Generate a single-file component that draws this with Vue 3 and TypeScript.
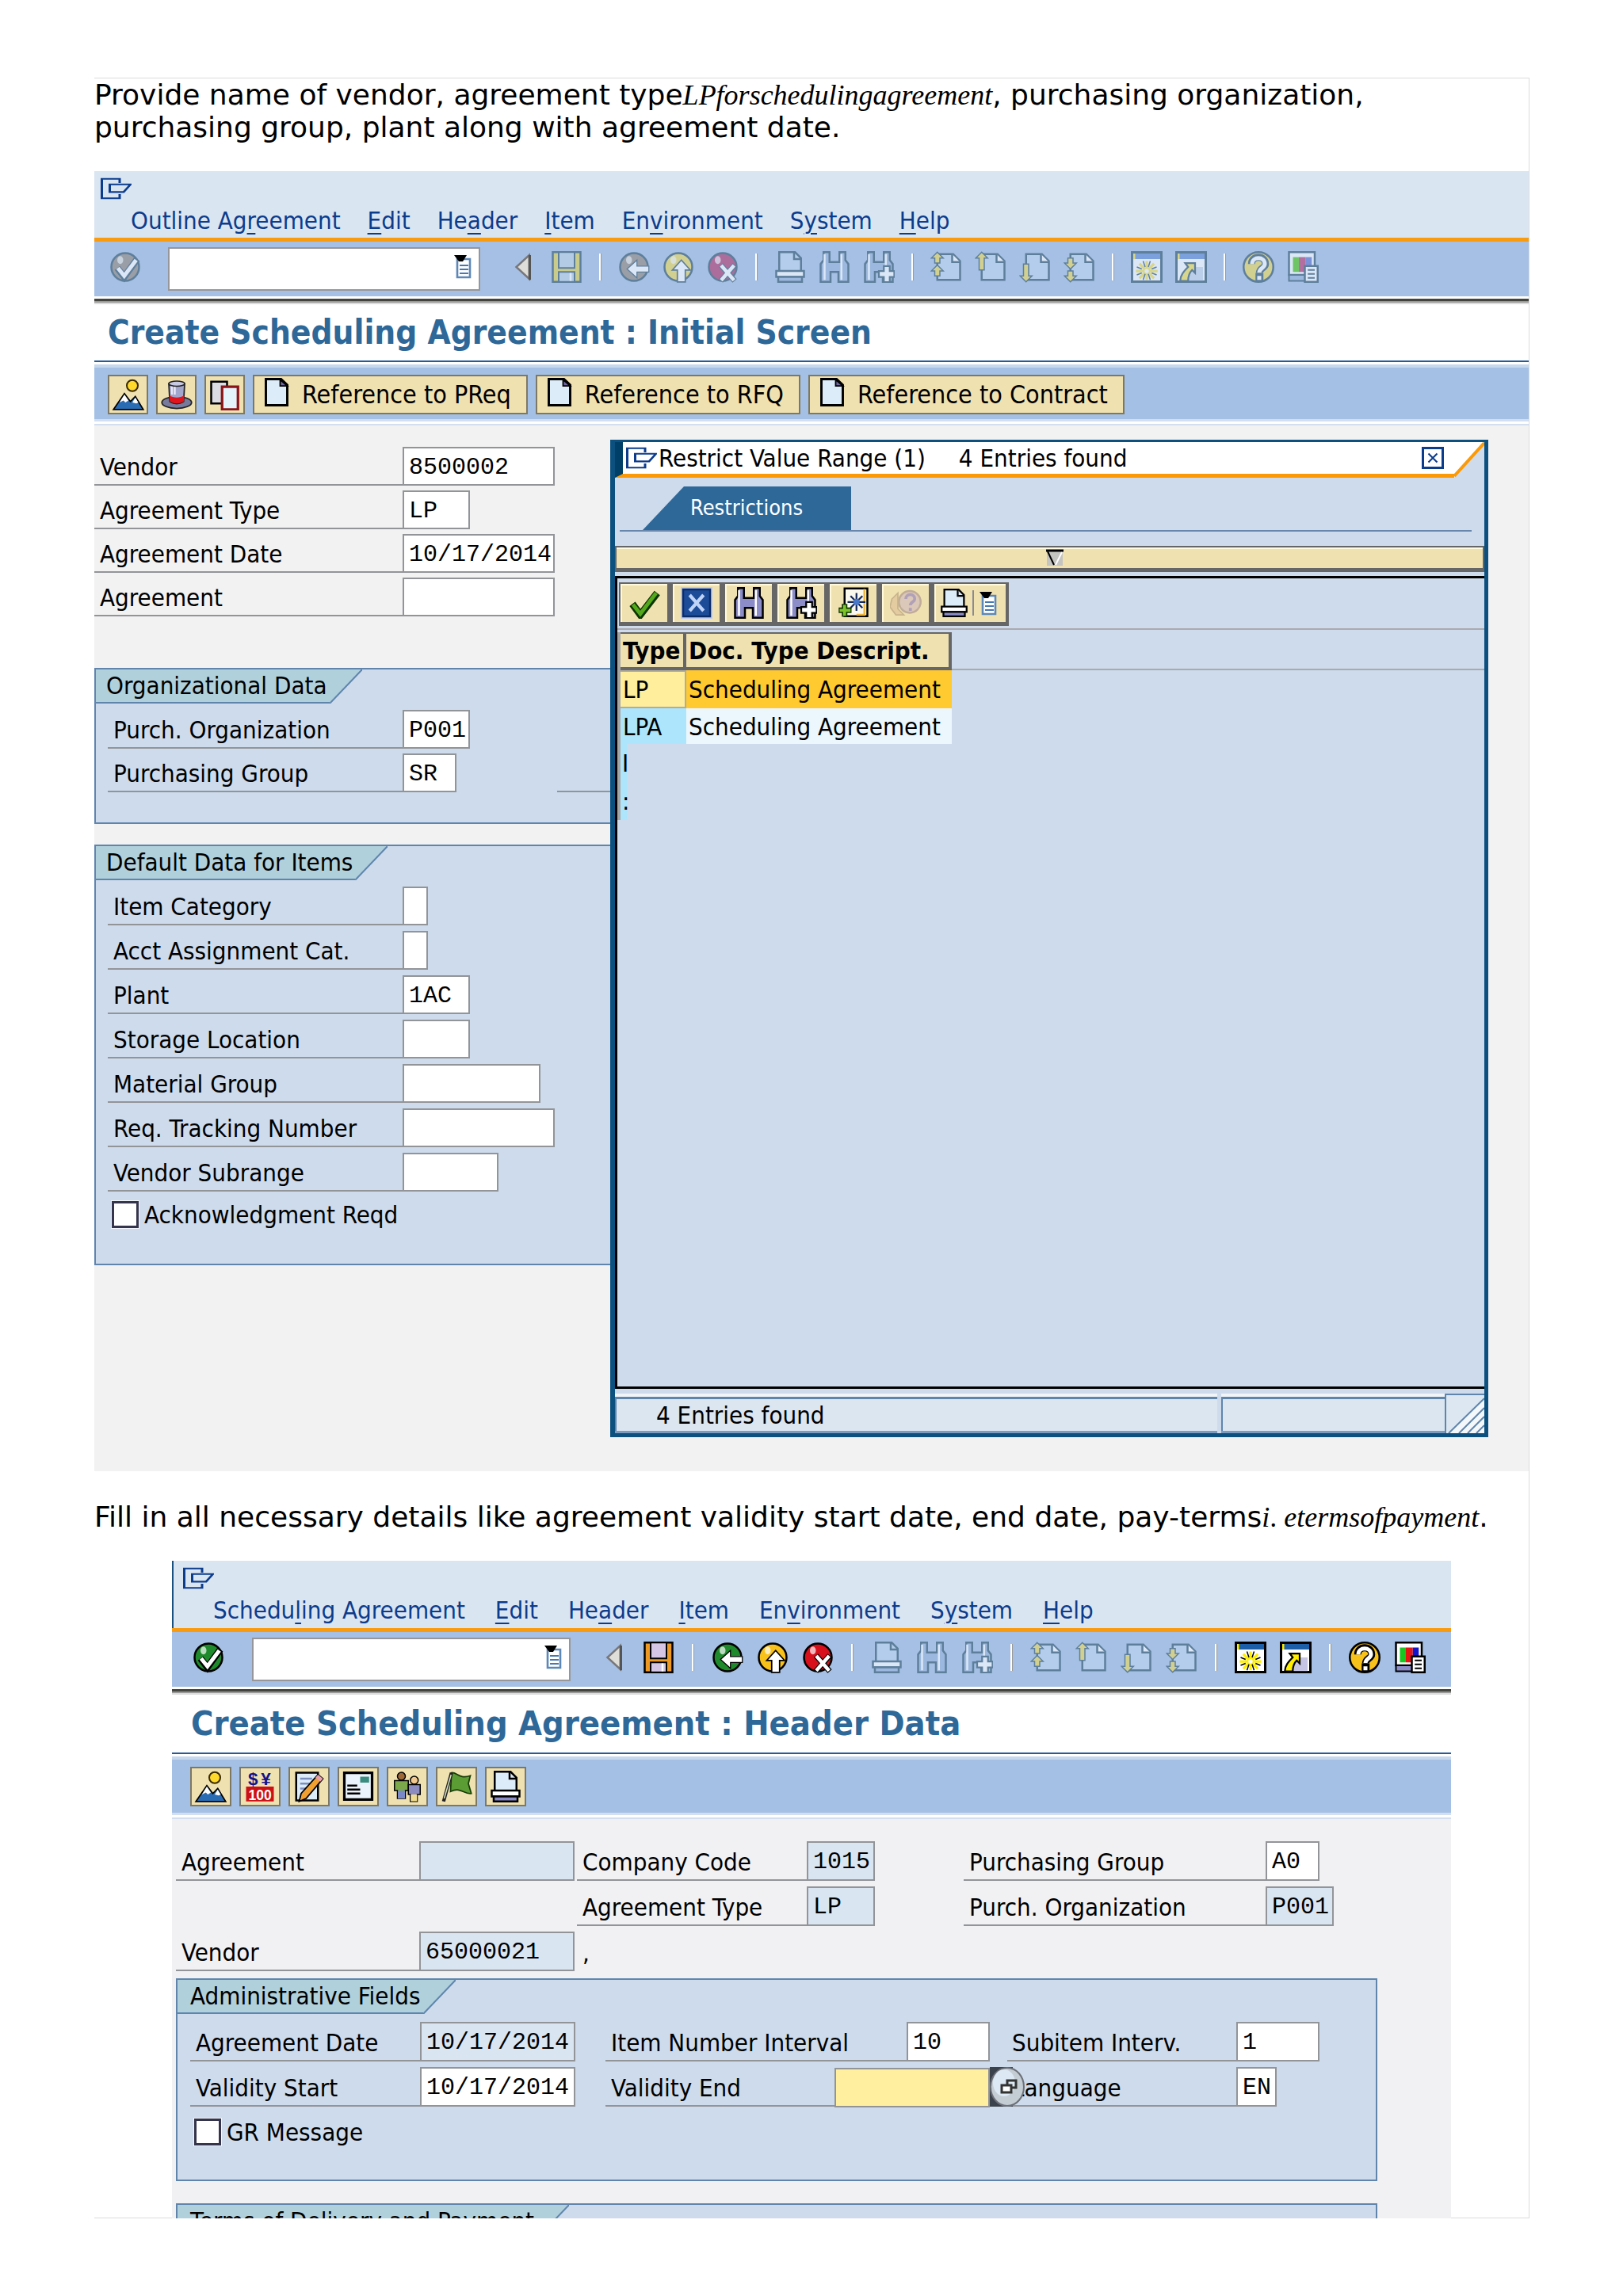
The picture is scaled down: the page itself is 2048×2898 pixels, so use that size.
<script setup lang="ts">
interface MenuEntry { before: string; key: string; after: string }
interface Tool { name: string; off?: boolean; sep?: boolean }
interface Field { id: string; label: string; value: string; width: number }

const menu = (...items: string[]): MenuEntry[] =>
  items.map((text) => {
    const [before, rest] = text.split('&')
    return { before, key: rest.slice(0, 1), after: rest.slice(1) }
  })

const outlineMenu = menu('Outline Ag&reement', '&Edit', 'He&ader', '&Item', 'En&vironment', 'S&ystem', '&Help')
const scheduleMenu = menu('Schedu&ling Agreement', '&Edit', 'He&ader', '&Item', 'En&vironment', 'S&ystem', '&Help')

const tools = (inactive: boolean): Tool[] => [
  { name: 'save', off: inactive },
  { name: '', sep: true },
  { name: 'back', off: inactive },
  { name: 'up', off: inactive },
  { name: 'cancel', off: inactive },
  { name: '', sep: true },
  { name: 'print', off: true },
  { name: 'find', off: true },
  { name: 'findnext', off: true },
  { name: '', sep: true },
  { name: 'first', off: true },
  { name: 'prev', off: true },
  { name: 'next', off: true },
  { name: 'last', off: true },
  { name: '', sep: true },
  { name: 'session', off: inactive },
  { name: 'shortcut', off: inactive },
  { name: '', sep: true },
  { name: 'help', off: inactive },
  { name: 'layout', off: inactive },
]
const outlineTools = tools(true)
const scheduleTools = tools(false)

const initialFields: Field[] = [
  { id: 'vendor', label: 'Vendor', value: '8500002', width: 192 },
  { id: 'agr-type', label: 'Agreement Type', value: 'LP', width: 85 },
  { id: 'agr-date', label: 'Agreement Date', value: '10/17/2014', width: 192 },
  { id: 'agr', label: 'Agreement', value: '', width: 192 },
]
const orgFields: Field[] = [
  { id: 'org', label: 'Purch. Organization', value: 'P001', width: 85 },
  { id: 'grp', label: 'Purchasing Group', value: 'SR', width: 68 },
]
const itemFields: Field[] = [
  { id: 'cat', label: 'Item Category', value: '', width: 32 },
  { id: 'acct', label: 'Acct Assignment Cat.', value: '', width: 32 },
  { id: 'plant', label: 'Plant', value: '1AC', width: 85 },
  { id: 'sloc', label: 'Storage Location', value: '', width: 85 },
  { id: 'mat', label: 'Material Group', value: '', width: 174 },
  { id: 'track', label: 'Req. Tracking Number', value: '', width: 192 },
  { id: 'sub', label: 'Vendor Subrange', value: '', width: 121 },
]
const references = ['Reference to PReq', 'Reference to RFQ', 'Reference to Contract']
const headerActions = ['overview', 'money', 'note', 'letter', 'people', 'flag', 'print']
const hitActions: Tool[] = [
  { name: 'tick' }, { name: 'close' }, { name: 'find' }, { name: 'findnext' }, { name: 'addnew' }, { name: 'handhelp' },
]

const vivid: Record<string, string> = {
  k: '#000000', w: '#ffffff', g: '#1f8a2c', y: '#f9c21a', r: '#d8101c', o: '#ee9a22', l: '#d5c6e6',
  p: '#dcecf8', b: '#8c8cc8', h: '#1c5fa8', s: '#ffee00', t: '#19c81f', m: '#e81414', n: '#1414c8',
}
const muted: Record<string, string> = {
  k: '#5e7f9c', w: '#dbe7f7', g: '#9a9ea6', y: '#d2d091', r: '#ad6d9c', o: '#c9cb8c', l: '#b4cbe6',
  p: '#b4cdec', b: '#9db8de', h: '#7ba0dc', s: '#d8d68c', t: '#6fc466', m: '#b36fa0', n: '#7b92d8',
}

const page = '<path d="M3.500 1.500h8l3.500 3.500v9.500h-11.500z" fill="$p" stroke="$k"/><path d="M11 1.500v4h4" fill="$w" stroke="$k"/>'
const upArrow = (y: number, len = 3) => `<path d="M3.500 ${y}l3 3h-1.700v${len}h-2.600v-${len}h-1.700z" fill="$y" stroke="$k" stroke-width=".6"/>`
const downArrow = (y: number, len = 3) => `<path d="M3.500 ${y}l3-3h-1.700v-${len}h-2.600v${len}h-1.700z" fill="$y" stroke="$k" stroke-width=".6"/>`
const glass = '<path d="M2.500 .5h3v5h5v-5h3v4l1.500 2v9h-5v-5h-4v5h-5v-9l1.500-2z" fill="$b" stroke="$k"/><path d="M3 1.500v13M11.500 1.500v13" stroke="$w"/>'
const ball = (c: string) => `<circle cx="8" cy="8" r="7" fill="$${c}" stroke="$k"/><ellipse cx="5.500" cy="4.500" rx="1.500" ry="2" fill="$w" opacity=".7"/>`
const win = '<rect x=".6" y=".6" width="14.800" height="14.800" fill="$w" stroke="$k" stroke-width="1.200"/><rect x="1.200" y="1.200" width="13.600" height="2.800" fill="$h"/><rect x="1.200" y="1.200" width="1" height="2.800" fill="$s"/>'

const art: Record<string, string> = {
  ok: ball('g') + '<path d="M4 8.500l3.500 4.500 6.500-9" fill="none" stroke="$k" stroke-width="3.400"/><path d="M4.300 8.500l3.200 4 6-8" fill="none" stroke="$w" stroke-width="2"/>',
  save: '<rect x="1" y=".5" width="14" height="15" fill="$o" stroke="$k"/><rect x="4" y=".5" width="8" height="8" fill="$l" stroke="$k" stroke-width=".8"/><rect x="4" y="10.500" width="8" height="5" fill="$l" stroke="$k" stroke-width=".8"/><path d="M10 11v4" stroke="$w"/>',
  back: ball('g') + '<path d="M4.500 9l5-4.500v3h6v3h-6v3z" fill="$w" stroke="$k" stroke-width=".5"/>',
  up: ball('y') + '<path d="M9.500 4.500l4.500 5h-2.500v6h-4v-6h-2.500z" fill="$w" stroke="$k" stroke-width=".7"/>',
  cancel: ball('r') + '<path d="M7 7l7 8M14 7l-7 8" stroke="$k" stroke-width="2.800"/><path d="M7.200 7.200l6.500 7.500M13.700 7.200l-6.500 7.500" stroke="$w" stroke-width="1.800"/>',
  print: '<path d="M2.500 10v-9.500h8l3 3v6.500" fill="$p" stroke="$k"/><path d="M10 .5v3.500h3.500" fill="none" stroke="$k"/><path d="M1 10h14v3h-14z" fill="$w" stroke="$k"/><path d="M2 13h12v2.500h-12z" fill="$b" stroke="$k"/>',
  find: glass,
  findnext: glass + '<path d="M10.500 7.500h3v2.500h2.300v3h-2.300v2.600h-3v-2.600h-2.500v-3h2.500z" fill="$w" stroke="$k" stroke-width=".9"/>',
  first: page + upArrow(.5, 2.5) + upArrow(7, 2.5),
  prev: page + upArrow(.5, 6),
  next: page + downArrow(15.5, 6),
  last: page + downArrow(9, 2.5) + downArrow(15.5, 2.5),
  session: win + '<path d="M8 5v9.500M2.500 10h11M4.300 6.300l7.400 7.400M11.700 6.300l-7.400 7.400" stroke="$s" stroke-width="1.300"/><path d="M6.200 5l1 3M9.800 5l-1 3M6.200 14.500l1-3M9.800 14.500l-1-3M3 8l2.500 1M13 8l-2.500 1M3 12l2.500-1M13 12l-2.500-1" stroke="$k" stroke-width=".6"/><circle cx="8" cy="10" r="1.100" fill="$w"/>',
  shortcut: win + '<path d="M9 8h5v7h-8z" fill="$b" opacity=".5"/><path d="M5 6h5v5l-1.500-1.500c-1.500 1.500-2 3-2 5.500h-4c0-3 2-5 4-7z" fill="$s" stroke="$k" stroke-width=".9"/>',
  help: '<circle cx="8" cy="8" r="7.500" fill="$y" stroke="$k"/><path d="M4.500 6.500c0-4.500 7-4.500 7 0 0 2-3 2-3 4.500" fill="none" stroke="$k" stroke-width="3.600"/><path d="M6.500 11h4v4.500h-4z" fill="$k"/><path d="M4.800 6.500c0-4 6.400-4 6.400 0 0 2-2.800 2-2.800 4.300M8.400 12.500v2" fill="none" stroke="$w" stroke-width="2"/>',
  layout: '<path d="M1 .5h13v11.500h-13z" fill="$w" stroke="$k"/><path d="M3 3h3v7.500h-3z" fill="$t"/><path d="M6 3h3.500v7.500h-3.500z" fill="$m"/><path d="M9.500 3h3v7.500h-3z" fill="$n"/><path d="M1 12h9v3h-9z" fill="$b" stroke="$k" stroke-width=".8"/><path d="M9 7.500h6.500v8h-6.500z" fill="$w" stroke="$k"/><path d="M10.500 9.500h3.500M10.500 11.500h3.500M10.500 13.500h3.500" stroke="$k" stroke-width=".8"/>',
  overview: '<circle cx="10" cy="3.500" r="2.800" fill="#ffd92b" stroke="#3a2a00" stroke-width=".8"/><path d="M.5 15.500l5.500-8 3 4 2.500-2.500 4 6.500z" fill="#2a6cb4" stroke="#000" stroke-width=".7"/><path d="M3.500 12l2.500-4 2 3-1.500 1-1-1zM10 12l1.500-2.500 1.500 2.500-1 .500z" fill="#fff"/>',
  hat: '<ellipse cx="8" cy="12" rx="7.500" ry="3" fill="#777a9c" stroke="#222" stroke-width=".7"/><path d="M4 2.500l.5 9c2 1.500 5 1.500 7 0l.5-9z" fill="#a3a6cc" stroke="#222" stroke-width=".7"/><path d="M5.500 3v5M7 3v5" stroke="#e8e8f8"/><path d="M4.300 8.500c2 1.300 5.400 1.300 7.400 0v3c-2 1.300-5.400 1.300-7.200 0z" fill="#e0141c"/><ellipse cx="8" cy="2.500" rx="4" ry="1.300" fill="#c8cae4" stroke="#222" stroke-width=".6"/>',
  copy: '<path d="M1 1.500h8v11h-8z" fill="#dcdce4" stroke="#000"/><path d="M6.500 4h8v11.500h-8z" fill="#e4f2fc" stroke="#8c1418" stroke-width="1.300"/>',
  money: '<rect x="1" y="8" width="14" height="7.500" fill="#cc1016"/><text x="2" y="7" font-family="Liberation Sans" font-weight="700" font-size="9" fill="#14148c">$</text><text x="8.500" y="7" font-family="Liberation Sans" font-weight="700" font-size="9" fill="#14148c">¥</text><text x="2.200" y="14.600" font-family="Liberation Sans" font-weight="700" font-size="7" fill="#fff">100</text>',
  note: '<path d="M1.500 1h11v14h-11z" fill="#dcecf8" stroke="#000"/><path d="M3.500 4h6M3.500 6.500h6M3.500 9h4" stroke="#7b8fc0"/><path d="M12.500 2l2.500 2-8.500 10-3.500 1.500 1-4z" fill="#f0a030" stroke="#000" stroke-width=".7"/><path d="M12.500 2l2.500 2-1.300 1.500-2.500-2z" fill="#e8a0b0"/>',
  letter: '<path d="M1 1h14v13.500h-14z" fill="#eaf3fb" stroke="#000" stroke-width="1.300"/><path d="M9 3h4.500v3h-4.500z" fill="#3a8c80"/><path d="M2.500 7.500h5M2.500 9.500h6.500M2.500 11.500h6.500" stroke="#000"/>',
  people: '<circle cx="5" cy="2.800" r="2" fill="#9c6838" stroke="#000" stroke-width=".6"/><path d="M1.500 5h7v5h-1.500v4h-4v-4h-1.500z" fill="#7ca84c" stroke="#000" stroke-width=".6"/><circle cx="11.500" cy="4.800" r="2" fill="#f0c890" stroke="#000" stroke-width=".6"/><path d="M8.500 7h6v5h-1.500v3.500h-3.500v-3.500h-1z" fill="#8c8cc0" stroke="#000" stroke-width=".6"/><path d="M3.200 10h3.600v4h-3.600z" fill="#7888c8"/><path d="M9.700 12h3.200v3.400h-3.200z" fill="#f0dc90"/>',
  flag: '<path d="M5.500 1c2.500-.5 4 3.500 9.500 1.500l-1 4 1.500 5c-4 .5-5-3.500-10.500-1z" fill="#5c9c34" stroke="#183c08" stroke-width=".7"/><path d="M5.500 1l-4 14.500" stroke="#222" stroke-width="1.700"/><path d="M5.300 2l-3.500 12" stroke="#d8e4c0" stroke-width=".6"/>',
  sheet: '<path d="M2 .7h8.500l3.500 3.300v11.300h-12z" fill="#dcecf8" stroke="#000" stroke-width="1.300"/><path d="M10 1v3.500h4z" fill="#7068a0" stroke="#000" stroke-width=".8"/>',
  tick: '<path d="M2 8.500l4 5.500 8.500-11" fill="none" stroke="#0c3400" stroke-width="3.600"/><path d="M2.300 8.800l3.700 4.700 8-10.500" fill="none" stroke="#54a81c" stroke-width="1.900"/>',
  close: '<rect x="0" y="0" width="16" height="16" fill="#bccdf8"/><rect x="1.200" y="1.200" width="13.600" height="13.600" fill="#1c4c98" stroke="#0c2c68"/><path d="M4.500 4l7 8M11.500 4l-7 8" stroke="#c0d4f8" stroke-width="1.700"/>',
  addnew: '<path d="M3.500 .7h11.500v14h-11.500z" fill="#fbf9ee" stroke="#000"/><path d="M13.500 1v13h-4" fill="none" stroke="#f0b840"/><path d="M9.500 3v9M5 7.500h9M6.500 4.500l6 6M12.500 4.500l-6 6" stroke="#14285c" stroke-width=".9"/><circle cx="9.500" cy="7.500" r="1.600" fill="#4878c8"/><path d="M3.500 8.500v6.500M.5 11.700h6.500" stroke="#0c3400" stroke-width="2.800"/><path d="M3.500 9v5.500M1 11.700h5.500" stroke="#7cc428" stroke-width="1.500"/>',
  handhelp: '<circle cx="10" cy="7.500" r="5.500" fill="#dcc8b8" stroke="#c0ac98"/><path d="M1 6l3-3v8l3 3h-4l-3-4z" fill="#e4cca0" stroke="#c8b48c" stroke-width=".7"/><path d="M8 6c0-3 4.500-3 4.500 0 0 1.500-2.200 1.500-2.200 3.200M10.300 10.500v1.500" fill="none" stroke="#b0a0b8" stroke-width="1.500"/>',
  list: '<path d="M4.500 3.500h8v11.500h-8z" fill="#fff" stroke="#5c88b8" stroke-width="1.300"/><path d="M6 7.500h5.500M6 10h5.500M6 12.500h5.500" stroke="#4878b0" stroke-width="1"/><path d="M2.500 1h8l-2.500 4h-2.500z" fill="#000"/>',
  left: '<path d="M11.500 2v12l-6.500-6z" fill="#e0ded8" stroke="#77777c" stroke-width="1"/><path d="M11.800 2v12.500" stroke="#555" stroke-width="1.200"/>',
  frame: '<path d="M10 4v-3h-9v14h9v-3" fill="none" stroke="#0c3c8c" stroke-width="1.200"/><path d="M5 5h10.500l-3.500 5.500h-7z" fill="none" stroke="#0c3c8c" stroke-width="1.200"/>',
}

const draw = (name: string, off = false): string =>
  art[name].replace(/\$([a-z])/g, (_, c: string) => (off ? muted : vivid)[c])
</script>

<template>
  <main class="sheet">
    <article class="frame">
      <p class="prose">Provide name of vendor, agreement type<em>LPforschedulingagreement</em>, purchasing organization, purchasing group, plant along with agreement date.</p>

      <section class="screen initial">
        <header class="menubar">
          <svg class="frame-icon" viewBox="0 0 16 16" preserveAspectRatio="none" v-html="draw('frame')"></svg>
          <nav>
            <a v-for="m in outlineMenu" :key="m.before + m.key" href="#">{{ m.before }}<u>{{ m.key }}</u>{{ m.after }}</a>
          </nav>
        </header>
        <div class="toolbar">
          <button type="button" class="tool" aria-label="Enter"><svg viewBox="0 0 16 16" v-html="draw('ok', true)"></svg></button>
          <div class="command">
            <input type="text" aria-label="Command">
            <button type="button" aria-label="Command list"><svg viewBox="0 0 16 16" v-html="draw('list')"></svg></button>
          </div>
          <button type="button" class="tool" aria-label="Collapse"><svg viewBox="0 0 16 16" v-html="draw('left')"></svg></button>
          <template v-for="(t, i) in outlineTools" :key="i">
            <span v-if="t.sep" class="sep"></span>
            <button v-else type="button" class="tool" :aria-label="t.name"><svg viewBox="0 0 16 16" v-html="draw(t.name, t.off)"></svg></button>
          </template>
        </div>
        <div class="shade"></div>
        <h1>Create Scheduling Agreement : Initial Screen</h1>
        <div class="actions">
          <button v-for="a in ['overview', 'hat', 'copy']" :key="a" type="button" class="action" :aria-label="a"><svg viewBox="0 0 16 16" v-html="draw(a)"></svg></button>
          <button v-for="r in references" :key="r" type="button" class="action wide"><svg viewBox="0 0 16 16" v-html="draw('sheet')"></svg>{{ r }}</button>
        </div>

        <div class="body">
          <div class="rows">
            <div v-for="f in initialFields" :key="f.id" class="row">
              <label :for="f.id">{{ f.label }}</label>
              <input :id="f.id" type="text" :value="f.value" :style="{ width: f.width + 'px' }">
            </div>
          </div>

          <section class="group org">
            <h2><span>Organizational Data</span><svg viewBox="0 0 41 43" preserveAspectRatio="none"><path d="M0 0h41l-41 43z" fill="#b0d0dc" /><path d="M41 0l-41 43" stroke="#5f85ad" stroke-width="2" /></svg></h2>
            <div class="rows">
              <div v-for="f in orgFields" :key="f.id" class="row">
                <label :for="f.id">{{ f.label }}</label>
                <input :id="f.id" type="text" :value="f.value" :style="{ width: f.width + 'px' }">
                <span v-if="f.id === 'grp'" class="trail"></span>
              </div>
            </div>
          </section>

          <section class="group items">
            <h2><span>Default Data for Items</span><svg viewBox="0 0 41 43" preserveAspectRatio="none"><path d="M0 0h41l-41 43z" fill="#b0d0dc" /><path d="M41 0l-41 43" stroke="#5f85ad" stroke-width="2" /></svg></h2>
            <div class="rows">
              <div v-for="f in itemFields" :key="f.id" class="row">
                <label :for="f.id">{{ f.label }}</label>
                <input :id="f.id" type="text" :value="f.value" :style="{ width: f.width + 'px' }">
              </div>
            </div>
            <div class="check"><input id="ack" type="checkbox"><label for="ack">Acknowledgment Reqd</label></div>
          </section>

          <div class="popup" role="dialog" aria-label="Restrict Value Range">
            <div class="caption">
              <div class="caption-main">
                <svg class="frame-icon" viewBox="0 0 16 16" preserveAspectRatio="none" v-html="draw('frame')"></svg>
                <span>Restrict Value Range (1)</span><span class="count">4 Entries found</span>
                <button type="button" class="dismiss" aria-label="Close"><svg viewBox="0 0 16 16"><path d="M4 4l8 8M12 4l-8 8" stroke="#0c3c8c" stroke-width="1.500" /></svg></button>
              </div>
              <svg class="corner" viewBox="0 0 38 45" preserveAspectRatio="none"><path d="M0 0h38l-38 45z" fill="#fff" /><path d="M38 1l-38 42" stroke="#fb9a06" stroke-width="4" /></svg>
            </div>
            <div class="tabs"><button type="button">Restrictions</button></div>
            <button type="button" class="expander" aria-label="Show restrictions"><svg viewBox="0 0 22 22"><path d="M1 2h20v19h-20z" fill="#c4c4c0" /><path d="M0 2h22" stroke="#000" stroke-width="3" /><path d="M2 3l8 17" stroke="#000" stroke-width="2" /><path d="M20 4l-8 16" stroke="#fff" stroke-width="2" /></svg></button>
            <div class="hits">
              <div class="hit-tools">
                <div class="strip">
                  <button v-for="t in hitActions" :key="t.name" type="button" :aria-label="t.name"><svg viewBox="0 0 16 16" v-html="draw(t.name)"></svg></button>
                  <button type="button" class="double" aria-label="Print options"><svg viewBox="0 0 16 16" v-html="draw('print')"></svg><i></i><svg class="small" viewBox="0 0 16 16" v-html="draw('list')"></svg></button>
                </div>
              </div>
              <div class="table-area">
                <table>
                  <thead><tr><th>Type</th><th>Doc. Type Descript.</th></tr></thead>
                  <tbody>
                    <tr class="picked"><td>LP</td><td>Scheduling Agreement</td></tr>
                    <tr class="plain"><td>LPA</td><td>Scheduling Agreement</td></tr>
                    <tr class="cut"><td><span>I</span></td><td></td></tr>
                    <tr class="cut"><td><span>:</span></td><td></td></tr>
                  </tbody>
                </table>
              </div>
            </div>
            <footer class="status">
              <div class="status-text">4 Entries found</div>
              <div class="status-side"></div>
              <svg viewBox="0 0 50 50" preserveAspectRatio="none"><path d="M0 0h50v50h-50z" fill="#dce7f2" /><path d="M50 6v44h-45z" fill="#f4f8fa" /><path d="M1 50v-49h49M50 6l-45 44M50 18l-32 32M50 29l-21 21M50 40l-10 10" fill="none" stroke="#5f85ad" stroke-width="2" /></svg>
            </footer>
          </div>
        </div>
      </section>

      <p class="prose">Fill in all necessary details like agreement validity start date, end date, pay-terms<em>i</em><b>. </b><em>etermsofpayment</em>.</p>

      <section class="screen header-data">
        <header class="menubar">
          <svg class="frame-icon" viewBox="0 0 16 16" preserveAspectRatio="none" v-html="draw('frame')"></svg>
          <nav>
            <a v-for="m in scheduleMenu" :key="m.before + m.key" href="#">{{ m.before }}<u>{{ m.key }}</u>{{ m.after }}</a>
          </nav>
        </header>
        <div class="toolbar">
          <button type="button" class="tool" aria-label="Enter"><svg viewBox="0 0 16 16" v-html="draw('ok')"></svg></button>
          <div class="command">
            <input type="text" aria-label="Command">
            <button type="button" aria-label="Command list"><svg viewBox="0 0 16 16" v-html="draw('list')"></svg></button>
          </div>
          <button type="button" class="tool" aria-label="Collapse"><svg viewBox="0 0 16 16" v-html="draw('left')"></svg></button>
          <template v-for="(t, i) in scheduleTools" :key="i">
            <span v-if="t.sep" class="sep"></span>
            <button v-else type="button" class="tool" :aria-label="t.name"><svg viewBox="0 0 16 16" v-html="draw(t.name, t.off)"></svg></button>
          </template>
        </div>
        <div class="shade"></div>
        <h1>Create Scheduling Agreement : Header Data</h1>
        <div class="actions">
          <button v-for="a in headerActions" :key="a" type="button" class="action" :aria-label="a"><svg viewBox="0 0 16 16" v-html="draw(a)"></svg></button>
        </div>

        <div class="body">
          <div class="grid top-grid">
            <div class="row c1"><label for="h-agr">Agreement</label><input id="h-agr" class="date" type="text" readonly></div>
            <div class="row c2"><label for="h-cc">Company Code</label><input id="h-cc" class="code" type="text" value="1015" readonly></div>
            <div class="row c3"><label for="h-pg">Purchasing Group</label><input id="h-pg" class="short" type="text" value="A0"></div>
            <div class="row c2"><label for="h-at">Agreement Type</label><input id="h-at" class="code" type="text" value="LP" readonly></div>
            <div class="row c3"><label for="h-po">Purch. Organization</label><input id="h-po" class="code" type="text" value="P001" readonly></div>
            <div class="row c1"><label for="h-v">Vendor</label><input id="h-v" class="date" type="text" value="65000021" readonly></div>
            <div class="comma">,</div>
          </div>

          <section class="group admin">
            <h2><span>Administrative Fields</span><svg viewBox="0 0 41 43" preserveAspectRatio="none"><path d="M0 0h41l-41 43z" fill="#b0d0dc" /><path d="M41 0l-41 43" stroke="#5f85ad" stroke-width="2" /></svg></h2>
            <div class="grid admin-grid">
              <div class="row c1"><label for="a-date">Agreement Date</label><input id="a-date" class="date" type="text" value="10/17/2014" readonly></div>
              <div class="row c2"><label for="a-int">Item Number Interval</label><input id="a-int" class="num" type="text" value="10"></div>
              <div class="row c3"><label for="a-sub">Subitem Interv.</label><input id="a-sub" class="num" type="text" value="1"></div>
              <div class="row c1"><label for="a-vs">Validity Start</label><input id="a-vs" class="date" type="text" value="10/17/2014"></div>
              <div class="row c2"><label for="a-ve">Validity End</label><div class="picker"><input id="a-ve" class="date" type="text"><button type="button" aria-label="Value help"><svg viewBox="0 0 44 50" preserveAspectRatio="none"><path d="M0 0h29v50h-29z" fill="#3c424c" /><ellipse cx="22" cy="25" rx="21" ry="24" fill="#c4ccd4" stroke="#6c7078" stroke-width="2" /><ellipse cx="18" cy="20" rx="14" ry="17" fill="#dce8f4" /><path d="M22 24v-7h11v9h-6" fill="none" stroke="#333" stroke-width="3" /><path d="M15 23h12v9h-12z" fill="#fff" stroke="#333" stroke-width="3" /></svg></button></div></div>
              <div class="row c3"><label for="a-lang">Language</label><input id="a-lang" class="lang" type="text" value="EN"></div>
            </div>
            <div class="check"><input id="gr" type="checkbox"><label for="gr">GR Message</label></div>
          </section>

          <section class="group terms">
            <h2><span>Terms of Delivery and Payment</span><svg viewBox="0 0 41 43" preserveAspectRatio="none"><path d="M0 0h41l-41 43z" fill="#b0d0dc" /><path d="M41 0l-41 43" stroke="#5f85ad" stroke-width="2" /></svg></h2>
          </section>
        </div>
      </section>
    </article>
  </main>
</template>

<style>
body { background: #fff; }
</style>

<style scoped>
* { box-sizing: border-box; }
.sheet { padding: 98px 118px 97px 119px; font: 31px/48px "DejaVu Sans Condensed", "Noto Sans", sans-serif; color: #000; }
.frame { border: 1px solid #dcdcdc; border-left: 0; }
.prose { margin: 0 0 35px; font: 36px/41px "DejaVu Sans", sans-serif; }
.prose em, .prose b { font: italic 36px/36px "Liberation Serif", serif; }
.prose b { font-style: normal; }
.screen + .prose { margin-top: 37px; }
button { font: inherit; color: inherit; padding: 0; border: 0; background: none; display: flex; align-items: center; flex: none; }
svg { display: block; flex: none; }
input { margin: 0; }

.screen { --gap: 16px; --edge: 18px; --title: 71px; --bar: 82px; background: #f2f2f2; }
.header-data { --gap: 17px; --edge: 25px; --title: 73px; --bar: 84px; margin: 0 98px -1px; background: #f1f1f3; }
.menubar { height: 84px; padding: 8px 7px 0; background: #dae5f2; }
.frame-icon { width: 40px; height: 28px; }
.header-data .menubar { height: 85px; padding-left: 11px; border-left: 2px solid #1a5080; }
.menubar nav { display: flex; gap: 34px; margin-top: 4px; padding-left: 39px; line-height: 44px; }
.header-data nav { gap: 38px; }
.menubar a { color: #0c3c8c; text-decoration: none; }
.menubar u { text-decoration-thickness: 2px; text-underline-offset: 5px; }
.toolbar { height: 74px; border-top: 5px solid #f99b10; background: #a5c0e4; padding: 0 0 6px calc(var(--edge) + 1px); display: flex; align-items: center; gap: var(--gap); }
.tool { width: 40px; height: 40px; }
.tool svg { width: 40px; height: 40px; }
.sep { width: 3px; height: 34px; margin: 0 5px; background: #fff; border-right: 1px solid #9a9a98; }
.command { position: relative; width: 394px; height: 55px; margin: 0 17px 0 18px; }
.header-data .command { width: 402px; }
.command input { width: 100%; height: 100%; border: 2px solid #97979b; background: #fff; }
.command button { position: absolute; right: 6px; top: 11px; }
.command svg { width: 32px; height: 32px; }
.shade { height: 10px; background: linear-gradient(#fff 0 3px, #44443f 3px 6px, #9a9a9a 6px 8px, #dcdcdc 8px); }
h1 { margin: 0; height: var(--title); padding-left: calc(var(--edge) - 1px); background: #fff; color: #2e6899; font: bold 42px/72px "DejaVu Sans Condensed", "Noto Sans", sans-serif; }
.header-data h1 { font-size: 43px; }
.actions { height: var(--bar); padding: 18px 17px 0; display: flex; gap: 10px; background: linear-gradient(#285a96 0 2px, #fff 2px 5px, #c5d8ee 5px 9px, transparent 9px), linear-gradient(to top, #d3dff0 0 2px, #fff 2px 5px, #d3dff0 5px 8px, #a4c1e5 8px); }
.header-data .actions { padding-left: 23px; }
.action { height: 50px; width: 51px; border: 2px solid #7d7864; background: #f0e1b1; justify-content: center; }
.header-data .action { width: 52px; }
.action svg { width: 42px; height: 40px; }
.action.wide { width: auto; padding: 0 19px 0 9px; font-size: 32px; }
.action.wide svg { width: 38px; height: 36px; margin: 0 13px 6px 0; }

.body { position: relative; padding: 27px 0 260px; }
.rows { display: grid; gap: 6px; }
.row { display: flex; height: 49px; }
.row label { border-bottom: 2px solid #929498; padding: 1px 0 0 7px; width: 389px; white-space: nowrap; }
.row input { height: 100%; border: 2px solid #929498; background: #fff; font: 30px/42px "Liberation Mono", monospace; padding: 2px 0 0 6px; color: #000; border-radius: 0; outline: 0; }
.row input:read-only { background: #dae5f2; }
.group { border: 2px solid #5f85ad; background: #cddbec; }
.group h2 { margin: 0 0 8px; font-size: 31px; font-weight: 400; line-height: 41px; display: flex; }
.group h2 span { background: #b0d0dc; border-bottom: 2px solid #5f85ad; padding: 0 3px 0 13px; }
.group h2 svg { width: 41px; height: 43px; }
.initial .group { margin-right: 1000px; }
.initial .group .row { padding-left: 15px; }
.initial .group .row label { width: 372px; }
.org { margin-top: 65px; padding-bottom: 38px; }
.items { margin-top: 26px; padding-bottom: 38px; }
.items .rows { gap: 7px; }
.trail { width: 100px; margin-left: 127px; border-bottom: 2px solid #929498; }
.check { display: flex; align-items: center; margin: 5px 0 0 20px; height: 48px; gap: 7px; }
.check input { appearance: none; width: 34px; height: 34px; background: #fff; border: 3px solid #34344c; outline: 1px solid #f4f6fa; }

.popup { position: absolute; left: 651px; right: 51px; top: 18px; bottom: 43px; border: 5px solid #0b507f; border-width: 3px 5px 5px 6px; background: #cddbec; display: flex; flex-direction: column; }
.caption { display: flex; height: 45px; }
.caption-main { flex: 1; display: flex; align-items: center; background: #fff; border-bottom: 5px solid #fb9a06; border-left: 10px solid #004068; padding: 0 13px 0 3px; line-height: 40px; }
.caption-main .frame-icon { margin-right: 2px; }
.count { margin-left: 42px; }
.corner { width: 38px; height: 45px; }
.dismiss { margin-left: auto; width: 28px; height: 28px; border: 3px solid #0c3c8c; }
.dismiss svg { width: 22px; height: 22px; }
.tabs { margin: 0 16px 18px 6px; padding: 11px 0 0 29px; border-bottom: 2px solid #6788ac; }
.tabs button { width: 263px; height: 55px; padding: 0 0 2px 60px; background: #2e6899; color: #fff; font-size: 27px; clip-path: polygon(52px 0, 100% 0, 100% 100%, 0 100%); }
.expander { height: 33px; border: 2px solid #666; border-bottom-width: 5px; padding-left: 12px; background: #f0e1b1; justify-content: center; box-shadow: inset 0 2px #fffbe0; }
.expander svg { width: 22px; height: 24px; }
.hits { flex: 1; margin-top: 5px; border: 3px solid #000; border-right: 0; }
.hit-tools { padding: 5px 0 3px 2px; border-bottom: 2px solid #a9aaae; }
.strip { display: inline-flex; gap: 7px; padding: 2px 4px 5px 2px; background: #666; vertical-align: top; }
.strip button { width: 59px; height: 48px; background: #f0e1b1; justify-content: center; box-shadow: inset 2px 2px #fff8da; }
.strip svg { width: 40px; height: 40px; }
.strip .double { width: 90px; }
.strip .double svg { width: 36px; height: 38px; }
.strip .double .small { width: 32px; height: 32px; }
.strip i { width: 2px; height: 32px; background: #8a8a90; margin: 0 2px 0 5px; }
.table-area { padding-top: 3px; background: linear-gradient(#aaa, #aaa) 0 49px / 100% 2px no-repeat; }
table { border-spacing: 0; border-left: 4px solid #a6a6a6; }
th { height: 48px; padding: 0 0 0 3px; text-align: left; font-size: 31px; line-height: 40px; background: #f0e1b1; border: solid #666; border-width: 2px 4px 4px 0; white-space: nowrap; }
th:first-child { width: 83px; }
th:last-child { width: 335px; }
td { height: 48px; padding: 0 0 0 3px; line-height: 44px; }
.picked td { background: #ffc930; }
.picked td:first-child { background: #ffee9c; border: solid #b0aca0; border-width: 2px 2px 2px 0; }
.plain td { height: 45px; background: #ebf7fd; }
.plain td:first-child { background: #ade6fc; }
.cut td:first-child { padding: 0; }
.cut span { display: block; width: 8px; height: 48px; padding-left: 2px; background: #ade6fc; line-height: 48px; }
.status { height: 56px; padding-top: 6px; display: flex; }
.status > div { border-top: 4px solid #f2f5f8; box-shadow: inset 0 3px #5f85ad, inset 2px 0 #5f85ad; border-bottom: 3px solid #7b9cc0; background: #dbe6f1; }
.status-text { flex: 1; padding-left: 52px; line-height: 47px; }
.status-side { width: 282px; margin-left: 5px; }
.status svg { width: 50px; height: 50px; }

.header-data .body { padding: 28px 93px 0 5px; }
.grid { display: grid; gap: 7px 0; grid-auto-rows: 50px; }
.grid .row { height: 50px; }
.top-grid { grid-template-columns: 506px 488px 1fr; padding-bottom: 9px; }
.admin-grid { grid-template-columns: 524px 507px 1fr; padding-left: 16px; }
.c1 { grid-column: 1; }
.c2 { grid-column: 2; }
.c3 { grid-column: 3; }
.comma { grid-column: 2; padding: 2px 0 0 7px; }
.header-data .row label { width: 307px; padding-top: 2px; }
.header-data .row .date { width: 196px; }
.header-data .row .code { width: 86px; }
.header-data .row .short { width: 68px; }
.header-data .row .num { width: 105px; }
.header-data .row .lang { width: 51px; }
.header-data .top-grid .c2 label { width: 290px; }
.header-data .top-grid .c3 label { width: 381px; }
.header-data .admin-grid .c1 label { width: 290px; }
.header-data .admin-grid .c2 label { flex: 1; }
.header-data .admin-grid .c2 { padding-right: 22px; }
.header-data .admin-grid .c3 label { width: 289px; padding-left: 6px; }
.header-data .group h2 { margin-bottom: 10px; }
.header-data .group h2 span { padding: 0 3px 0 16px; }
.picker { position: relative; z-index: 1; }
.header-data .row .picker input { background: #ffef9f; }
.picker button { position: absolute; left: 100%; top: 0; }
.picker svg { width: 44px; height: 50px; }
.admin { padding-bottom: 36px; }
.admin .check { margin: 8px 0 0 21px; }
.terms { margin-top: 28px; height: 19px; padding: 0; border-bottom: 0; overflow: hidden; }
</style>
